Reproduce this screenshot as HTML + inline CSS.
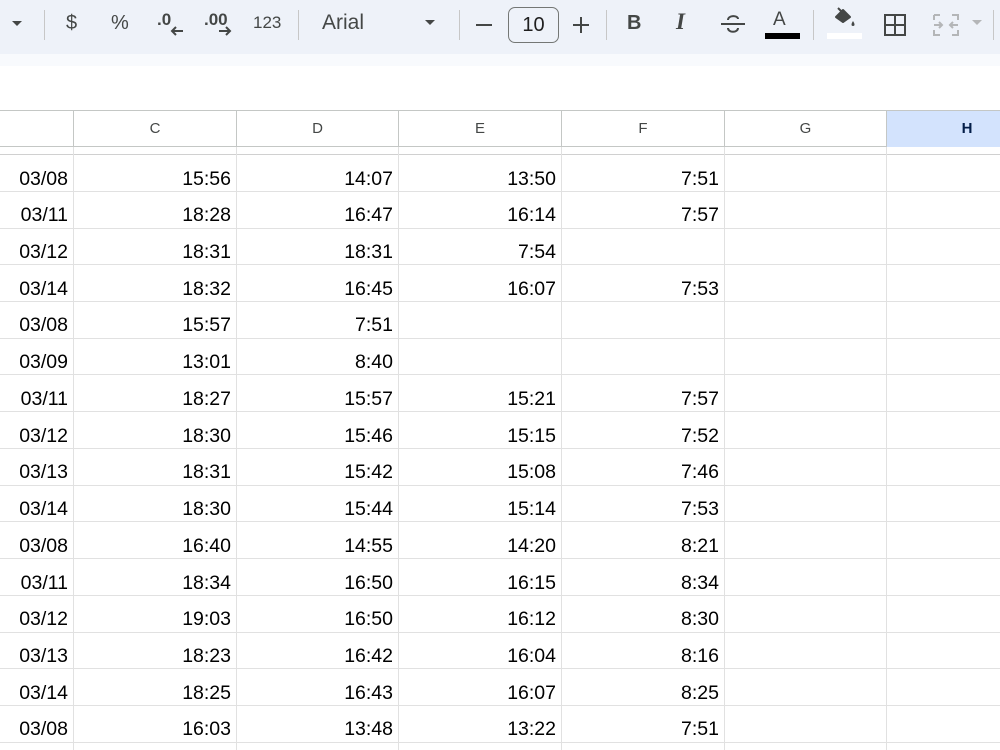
<!DOCTYPE html>
<html><head><meta charset="utf-8"><style>
*{margin:0;padding:0;box-sizing:border-box}
body{width:1000px;height:750px;overflow:hidden;background:#fff;font-family:"Liberation Sans",Arial,sans-serif;position:relative}
.tb{position:absolute;left:0;top:0;width:1000px;height:54px;background:#eef2f9}
.band{position:absolute;left:0;top:54px;width:1000px;height:12px;background:#f8fafd}
.t{position:absolute;color:#444746;font-size:19px;top:12px;line-height:22px}
.sep{position:absolute;top:10px;width:1px;height:30px;background:#c7c7c7}
.hdr{position:absolute;top:110px;height:37px;width:1000px;border-top:1px solid #c4c7c5;border-bottom:1px solid #c4c7c5}
.hl{position:absolute;top:0;width:1px;height:36px;background:#c4c7c5}
.hc{position:absolute;top:9px;font-size:15px;color:#444746;text-align:center}
.vl{position:absolute;top:147px;width:1px;height:603px;background:#e1e1e1}
.hrow{position:absolute;left:0;width:1000px;height:1px;background:#e1e1e1}
.c{position:absolute;font-size:19.5px;color:#000;text-align:right;line-height:22px}
</style></head><body>
<div class="tb"></div><div class="band"></div>
<svg style="position:absolute;left:11px;top:20px" width="12" height="8"><path d="M1 1h10L6 6z" fill="#444746"/></svg>
<div class="sep" style="left:44px"></div>
<div class="t" style="left:66px;font-size:20px">$</div>
<div class="t" style="left:111px;font-size:20px">%</div>
<div class="t" style="left:157px;font-weight:bold;font-size:17px;top:9px">.0</div>
<svg style="position:absolute;left:170px;top:26px" width="14" height="10"><path d="M13 5H3M6 1L2 5l4 4" stroke="#444746" stroke-width="2" fill="none"/></svg>
<div class="t" style="left:204px;font-weight:bold;font-size:17px;top:9px">.00</div>
<svg style="position:absolute;left:218px;top:26px" width="14" height="10"><path d="M1 5h10M8 1l4 4-4 4" stroke="#444746" stroke-width="2" fill="none"/></svg>
<div class="t" style="left:253px;font-size:17px">123</div>
<div class="sep" style="left:298px"></div>
<div class="t" style="left:322px;font-size:21px;top:12px">Arial</div>
<svg style="position:absolute;left:424px;top:19px" width="12" height="8"><path d="M1 1h10L6 6z" fill="#444746"/></svg>
<div class="sep" style="left:459px"></div>
<div style="position:absolute;left:476px;top:24px;width:16px;height:2px;background:#444746"></div>
<div style="position:absolute;left:508px;top:7px;width:51px;height:36px;border:1px solid #747775;border-radius:7px;font-size:20px;color:#1f1f1f;text-align:center;line-height:34px">10</div>
<svg style="position:absolute;left:572px;top:16px" width="18" height="18"><path d="M9 1v16M1 9h16" stroke="#444746" stroke-width="2"/></svg>
<div class="sep" style="left:606px"></div>
<div class="t" style="left:627px;font-weight:bold;font-size:20px">B</div>
<div class="t" style="left:676px;font-style:italic;font-weight:bold;font-family:'Liberation Serif',serif;font-size:23px;top:11px">I</div>
<svg style="position:absolute;left:720px;top:13px" width="26" height="22"><path d="M1 11h24" stroke="#444746" stroke-width="2"/><path d="M8 7c0-5 10-5 10-1M8 15c0 5 10 5 10 0" stroke="#444746" stroke-width="2" fill="none"/></svg>
<div class="t" style="left:773px;font-size:19px;top:9px">A</div>
<div style="position:absolute;left:765px;top:33px;width:35px;height:6px;background:#000"></div>
<div class="sep" style="left:813px"></div>
<svg style="position:absolute;left:832px;top:6px" width="26" height="24"><path d="M6 2l3 3M4 11l7-7 7 7-7 5z" fill="#444746" stroke="#444746" stroke-width="2" stroke-linejoin="round"/><path d="M21 15c-2 3-2 5 0 5s2-2 0-5z" fill="#444746"/></svg>
<div style="position:absolute;left:827px;top:33px;width:35px;height:6px;background:#fff"></div>
<svg style="position:absolute;left:884px;top:14px" width="22" height="22"><path d="M1 1h20v20H1zM11 1v20M1 11h20" stroke="#444746" stroke-width="2" fill="none"/></svg>
<svg style="position:absolute;left:932px;top:13px" width="28" height="24"><g stroke="#b4b6b8" stroke-width="2" fill="none"><path d="M2 2h6M2 2v5M2 17v5h6M20 2h6v5M26 17v5h-6M2 12h8M7 9l3 3-3 3M26 12h-8M21 9l-3 3 3 3"/></g></svg>
<svg style="position:absolute;left:971px;top:19px" width="12" height="8"><path d="M1 1h10L6 6z" fill="#b4b6b8"/></svg>
<div class="sep" style="left:993px"></div>

<div class="hdr">
<div style="position:absolute;left:886px;top:0;width:114px;height:36px;background:#d3e3fd"></div>
<div class="hl" style="left:73px"></div><div class="hl" style="left:236px"></div><div class="hl" style="left:398px"></div><div class="hl" style="left:561px"></div><div class="hl" style="left:724px"></div><div class="hl" style="left:886px"></div>
<div class="hc" style="left:74px;width:162px">C</div>
<div class="hc" style="left:237px;width:161px">D</div>
<div class="hc" style="left:399px;width:162px">E</div>
<div class="hc" style="left:562px;width:162px">F</div>
<div class="hc" style="left:725px;width:161px">G</div>
<div class="hc" style="left:887px;width:160px;color:#041e49;font-weight:bold">H</div>
</div>
<div class="hrow" style="top:154px;background:#d0d0d0"></div>
<div class="vl" style="left:73px"></div><div class="vl" style="left:236px"></div><div class="vl" style="left:398px"></div><div class="vl" style="left:561px"></div><div class="vl" style="left:724px"></div><div class="vl" style="left:886px"></div>
<div id="g"></div>
<script>
var d=[["03/08","15:56","14:07","13:50","7:51"],["03/11","18:28","16:47","16:14","7:57"],["03/12","18:31","18:31","7:54",""],["03/14","18:32","16:45","16:07","7:53"],["03/08","15:57","7:51","",""],["03/09","13:01","8:40","",""],["03/11","18:27","15:57","15:21","7:57"],["03/12","18:30","15:46","15:15","7:52"],["03/13","18:31","15:42","15:08","7:46"],["03/14","18:30","15:44","15:14","7:53"],["03/08","16:40","14:55","14:20","8:21"],["03/11","18:34","16:50","16:15","8:34"],["03/12","19:03","16:50","16:12","8:30"],["03/13","18:23","16:42","16:04","8:16"],["03/14","18:25","16:43","16:07","8:25"],["03/08","16:03","13:48","13:22","7:51"]];
var R=[68,231,393,556,719],h="";
for(var i=0;i<16;i++){var t=154+i*36.73;h+='<div class="hrow" style="top:'+(t+36.73).toFixed(1)+'px"></div>';
for(var j=0;j<5;j++)if(d[i][j])h+='<div class="c" style="right:'+(1000-R[j])+'px;top:'+(t+13.5).toFixed(1)+'px">'+d[i][j]+'</div>';}
document.getElementById("g").innerHTML=h;
</script>
</body></html>
